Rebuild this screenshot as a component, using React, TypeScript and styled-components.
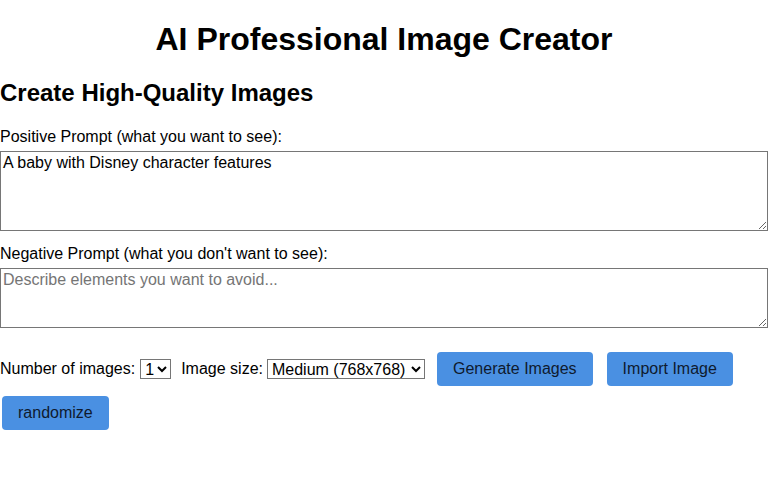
import React, { useState } from "react";
import styled, { createGlobalStyle } from "styled-components";

const GlobalStyle = createGlobalStyle`
  body {
    margin: 0;
    font-family: "Liberation Sans", Arial, sans-serif;
    color: #000;
    background: #fff;
  }
`;

function App() {
  const [positive, setPositive] = useState("A baby with Disney character features");
  const [negative, setNegative] = useState("");
  const [count, setCount] = useState("1");
  const [size, setSize] = useState("768");

  return (
    <Page>
      <GlobalStyle />
      <Title>AI Professional Image Creator</Title>
      <SubTitle>Create High-Quality Images</SubTitle>

      <Label htmlFor="positive">Positive Prompt (what you want to see):</Label>
      <PromptArea
        id="positive"
        $height={80}
        value={positive}
        onChange={(e) => setPositive(e.currentTarget.value)}
      />

      <Label htmlFor="negative">Negative Prompt (what you don't want to see):</Label>
      <PromptArea
        id="negative"
        $height={60}
        placeholder="Describe elements you want to avoid..."
        value={negative}
        onChange={(e) => setNegative(e.currentTarget.value)}
      />

      <Controls>
        <InlineLabel $after={10}>
          Number of images:
          <Select value={count} onChange={(e) => setCount(e.currentTarget.value)}>
            <option value="1">1</option>
            <option value="2">2</option>
            <option value="3">3</option>
            <option value="4">4</option>
          </Select>
        </InlineLabel>
        <InlineLabel $after={5} $tight>
          Image size:
          <Select value={size} onChange={(e) => setSize(e.currentTarget.value)}>
            <option value="512">Small (512x512)</option>
            <option value="768">Medium (768x768)</option>
            <option value="1024">Large (1024x1024)</option>
          </Select>
        </InlineLabel>
        <Button type="button">Generate Images</Button>
        <Button type="button">Import Image</Button>
      </Controls>

      <SecondRow>
        <Button type="button">randomize</Button>
      </SecondRow>
    </Page>
  );
}

const Page = styled.div`
  width: 768px;
  padding-top: 1px;
`;

const Title = styled.h1`
  font-size: 32px;
  font-weight: bold;
  text-align: center;
  margin: 20px 0 21px;
`;

const SubTitle = styled.h2`
  font-size: 24px;
  font-weight: bold;
  margin: 21px 0 21px;
`;

const Label = styled.label`
  display: block;
  font-size: 16px;
  margin-bottom: 5px;
`;

const PromptArea = styled.textarea<{ $height: number }>`
  display: block;
  box-sizing: border-box;
  width: 100%;
  height: ${(p) => p.$height}px;
  margin: 0 0 14px;
  padding: 2px;
  font-family: "Liberation Sans", Arial, sans-serif;
  font-size: 16px;
  border: 1px solid #767676;
  border-radius: 0;

  &::placeholder {
    color: #757575;
  }
`;

const Controls = styled.div`
  display: flex;
  align-items: center;
  margin-top: 24px;
  height: 34px;
`;

const InlineLabel = styled.label<{ $after: number; $tight?: boolean }>`
  display: flex;
  align-items: center;
  gap: ${(p) => (p.$tight ? 4 : 5)}px;
  font-size: 16px;
  margin-right: ${(p) => p.$after}px;
`;

const Select = styled.select`
  font-family: "Liberation Sans", Arial, sans-serif;
  font-size: 16px;
  height: 20px;
  padding: 0;
  border: 1px solid #767676;
  border-radius: 0;
  background: #fff;
  color: #000;
`;

const Button = styled.button`
  font-family: "Liberation Sans", Arial, sans-serif;
  font-size: 16px;
  height: 34px;
  padding: 0 16px;
  margin: 0 7px;
  background: #4a90e2;
  color: #0f1a2e;
  border: none;
  border-radius: 4px;
  cursor: pointer;
`;

const SecondRow = styled.div`
  display: flex;
  margin-top: 10px;

  ${Button} {
    margin: 0 2px;
  }
`;

export default App;
